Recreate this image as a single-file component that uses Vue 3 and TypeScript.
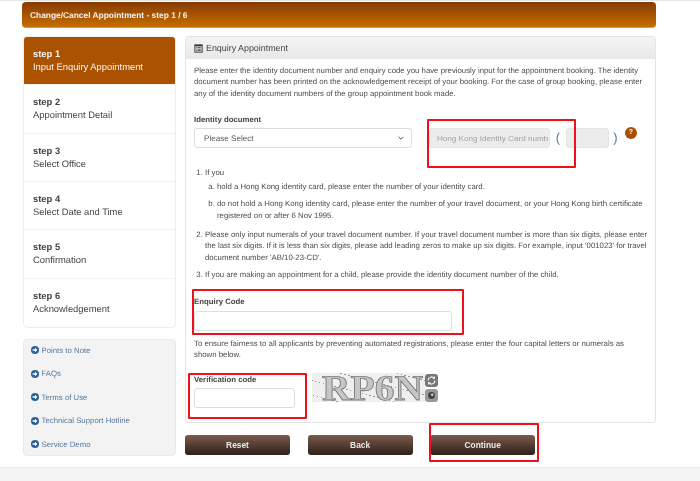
<script setup lang="ts">
const steps = [
  { n: 'step 1', label: 'Input Enquiry Appointment', active: true },
  { n: 'step 2', label: 'Appointment Detail', active: false },
  { n: 'step 3', label: 'Select Office', active: false },
  { n: 'step 4', label: 'Select Date and Time', active: false },
  { n: 'step 5', label: 'Confirmation', active: false },
  { n: 'step 6', label: 'Acknowledgement', active: false },
]
const links = ['Points to Note', 'FAQs', 'Terms of Use', 'Technical Support Hotline', 'Service Demo']
const noise: number[][] = []
for (let i = 0; i < 90; i++) {
  noise.push([(i * 37) % 113, (i * 53 + 7) % 29])
}
</script>

<template>
  <div class="page">
    <div class="wrap">
      <header class="title">Change/Cancel Appointment - step 1 / 6</header>
      <div class="columns">
        <aside class="side">
          <ul class="steps">
            <li v-for="s in steps" :key="s.n" class="step" :class="{ active: s.active }">
              <strong>{{ s.n }}</strong>
              <span>{{ s.label }}</span>
            </li>
          </ul>
          <ul class="links">
            <li v-for="l in links" :key="l">
              <svg class="arrow" viewBox="0 0 12 12" aria-hidden="true">
                <circle cx="6" cy="6" r="6" fill="#2a6099" />
                <path d="M2.5 4.8H6V2.8L9.6 6 6 9.2V7.2H2.5z" fill="#fff" />
              </svg>
              {{ l }}
            </li>
          </ul>
        </aside>
        <main class="content">
          <section class="panel">
            <h2 class="panel-head">
              <svg class="list-icon" viewBox="0 0 12 12" aria-hidden="true">
                <path d="M0.5 0.5h11v11H0.5z" fill="#333" />
                <path d="M1.7 3h8.6v7.3H1.7z" fill="#ddd" />
                <path d="M3 4.2h1.6v1.2H3zM5.4 4.2H9v1.2H5.4zM3 6.2h1.6v1.2H3zM5.4 6.2H9v1.2H5.4zM3 8.2h1.6v1.2H3zM5.4 8.2H9v1.2H5.4z" fill="#333" />
              </svg>
              Enquiry Appointment
            </h2>
            <div class="panel-body">
              <p class="intro">Please enter the identity document number and enquiry code you have previously input for the appointment booking. The identity document number has been printed on the acknowledgement receipt of your booking. For the case of group booking, please enter any of the identity document numbers of the group appointment book made.</p>
              <label class="label id-label">Identity document</label>
              <div class="id-row">
                <div class="select">
                  <span>Please Select</span>
                  <svg viewBox="0 0 10 6" aria-hidden="true"><path d="M1 1l4 4 4-4" fill="none" stroke="#444" stroke-width="1.5" /></svg>
                </div>
                <input class="input disabled id-number" disabled placeholder="Hong Kong Identity Card number" />
                <span class="paren">(</span>
                <input class="input disabled id-check" disabled />
                <span class="paren close">)</span>
                <span class="help">?</span>
              </div>
              <ol class="notes">
                <li>
                  If you
                  <ol class="sub" type="a">
                    <li>hold a Hong Kong identity card, please enter the number of your identity card.</li>
                    <li>do not hold a Hong Kong identity card, please enter the number of your travel document, or your Hong Kong birth certificate registered on or after 6 Nov 1995.</li>
                  </ol>
                </li>
                <li>Please only input numerals of your travel document number. If your travel document number is more than six digits, please enter the last six digits. If it is less than six digits, please add leading zeros to make up six digits. For example, input '001023' for travel document number 'AB/10-23-CD'.</li>
                <li>If you are making an appointment for a child, please provide the identity document number of the child.</li>
              </ol>
              <label class="label code-label">Enquiry Code</label>
              <input class="input code-input" />
              <p class="fair">To ensure fairness to all applicants by preventing automated registrations, please enter the four capital letters or numerals as shown below.</p>
              <div class="verify">
                <div class="verify-field">
                  <label class="label">Verification code</label>
                  <input class="input verify-input" />
                </div>
                <div class="captcha">
                  <svg class="captcha-img" viewBox="0 0 113 29" aria-label="Verification image">
                    <rect width="113" height="29" fill="#efefef" />
                    <rect v-for="(p, i) in noise" :key="i" :x="p[0]" :y="p[1]" width="1" height="1" fill="#999" />
                    <text x="10" y="27" textLength="101" lengthAdjust="spacingAndGlyphs" class="captcha-text">RP6N</text>
                  </svg>
                  <div class="captcha-tools">
                    <svg viewBox="0 0 13 13" aria-hidden="true">
                      <rect width="13" height="13" rx="3" fill="#777" />
                      <path d="M3 6.5a3.5 3.5 0 0 1 6.2-2.2M10 6.5a3.5 3.5 0 0 1-6.2 2.2" fill="none" stroke="#f2f2f2" stroke-width="1.2" />
                      <path d="M10 2v2.8H7.2zM3 11V8.2h2.8z" fill="#f2f2f2" />
                    </svg>
                    <svg viewBox="0 0 13 13" aria-hidden="true">
                      <rect width="13" height="13" rx="3" fill="#999" />
                      <circle cx="6.5" cy="6.5" r="3.4" fill="#444" />
                      <circle cx="7.2" cy="5.8" r="1.3" fill="#ccc" />
                    </svg>
                  </div>
                </div>
              </div>
            </div>
          </section>
          <div class="actions">
            <button class="btn" type="button">Reset</button>
            <button class="btn" type="button">Back</button>
            <button class="btn" type="button">Continue</button>
          </div>
        </main>
      </div>
    </div>
    <footer class="foot"></footer>
    <div class="mark m1"></div>
    <div class="mark m2"></div>
    <div class="mark m3"></div>
    <div class="mark m4"></div>
  </div>
</template>

<style scoped>
.page {
  position: relative;
  width: 700px;
  height: 481px;
  overflow: hidden;
  background: #fff;
  border-top: 1px solid #e6e6e6;
  box-sizing: border-box;
  font-family: "Liberation Sans", Arial, sans-serif;
  text-rendering: geometricPrecision;
  color: #4c4c4c;
  font-size: 7.8px;
  filter: blur(0.3px);
}
.wrap {
  width: 634px;
  margin-left: 22px;
  padding-top: 1px;
}
.title {
  height: 26px;
  box-sizing: border-box;
  padding: 0 8px;
  display: flex;
  align-items: center;
  border-radius: 4px;
  border-bottom: 1px solid #d99a3c;
  background: linear-gradient(#873a00, #c56e00);
  color: #f2f2f2;
  font-weight: 700;
  font-size: 8.4px;
}
.columns {
  display: grid;
  grid-template-columns: 153px 471px;
  gap: 9px;
  margin: 8px 0 0 1px;
}
ul {
  list-style: none;
  margin: 0;
  padding: 0;
}
.steps {
  border: 1px solid #eee;
  border-radius: 4px;
  overflow: hidden;
  background: #fff;
}
.step {
  height: 48.33px;
  box-sizing: border-box;
  padding: 10px 9px 0;
  display: flex;
  flex-direction: column;
  font-size: 9.4px;
  line-height: 13px;
  color: #444;
  border-bottom: 1px solid #f2f2f2;
}
.step:last-child {
  border-bottom: 0;
}
.step strong {
  font-weight: 700;
}
.step.active {
  background: #aa5200;
  color: #f5f5f5;
}
.links {
  margin-top: 11px;
  height: 117px;
  box-sizing: border-box;
  padding: 3px 7px;
  background: #f3f3f3;
  border: 1px solid #e9e9e9;
  border-radius: 4px;
  display: flex;
  flex-direction: column;
  justify-content: space-between;
  color: #55789f;
  font-size: 7.8px;
}
.links li {
  display: flex;
  align-items: center;
  gap: 2.5px;
  height: 15px;
}
.arrow {
  width: 8px;
  height: 8px;
}
.panel {
  height: 387px;
  box-sizing: border-box;
  border: 1px solid #e4e4e4;
  border-radius: 3px;
}
.panel-head {
  margin: 0;
  height: 22px;
  box-sizing: border-box;
  padding: 0 8px;
  display: flex;
  align-items: center;
  gap: 3px;
  font-weight: 400;
  font-size: 8.9px;
  color: #444;
  background: linear-gradient(#f4f4f4, #e8e8e8);
}
.list-icon {
  width: 9px;
  height: 9px;
}
.panel-body {
  padding: 6px 8px 0;
  line-height: 11.3px;
}
.intro {
  margin: 0;
}
.label {
  display: block;
  font-weight: 700;
  color: #444;
  font-size: 7.8px;
}
.id-label {
  margin-top: 15px;
}
.id-row {
  display: flex;
  align-items: flex-start;
  margin-top: 3px;
  height: 20px;
}
.select {
  width: 218px;
  height: 20px;
  box-sizing: border-box;
  padding: 0 7px 0 9px;
  border: 1px solid #ddd;
  border-radius: 3px;
  display: flex;
  align-items: center;
  justify-content: space-between;
  color: #555;
  font-size: 8.1px;
}
.select svg {
  width: 6px;
  height: 4px;
}
.input {
  box-sizing: border-box;
  height: 20px;
  border: 1px solid #ddd;
  border-radius: 3px;
  background: #fff;
  font: inherit;
  padding: 0 1px 0 7px;
  display: block;
  outline: 0;
}
.input.disabled {
  background: #ececec;
  border-color: #e4e4e4;
}
.input.disabled::placeholder {
  color: #a0a0a0;
  opacity: 1;
}
.id-number {
  width: 121px;
  margin-left: 17px;
  font-size: 8.1px;
}
.id-check {
  width: 43px;
}
.paren {
  width: 16px;
  text-align: center;
  line-height: 20px;
  font-size: 13px;
  color: #55789f;
}
.paren.close {
  width: 13px;
}
.help {
  width: 12px;
  height: 12px;
  margin: -1px 0 0 3px;
  border-radius: 50%;
  background: #a85000;
  color: #fff;
  font-size: 7px;
  font-weight: 700;
  line-height: 12px;
  text-align: center;
}
.notes {
  margin: 19px -5px 0 0;
  padding-left: 11px;
}
.notes > li {
  margin-bottom: 6px;
}
.notes > li:first-child {
  margin-bottom: 8px;
}
.sub {
  margin: 3px 0 0;
  padding-left: 12px;
}
.sub li {
  margin-bottom: 5.7px;
}
.sub li:last-child {
  margin-bottom: 0;
}
.code-label {
  margin-top: 16px;
}
.code-input {
  width: 258px;
  margin-top: 3px;
}
.fair {
  margin: 7px 0 0;
}
.verify {
  display: flex;
  align-items: flex-start;
  margin-top: 14px;
}
.verify-field {
  width: 118px;
}
.verify-input {
  width: 101px;
  margin-top: 3px;
}
.captcha {
  display: flex;
  align-items: flex-start;
  margin-top: -1px;
}
.captcha-img {
  width: 113px;
  height: 29px;
  display: block;
  overflow: visible;
}
.captcha-text {
  font-family: "Liberation Serif", serif;
  font-size: 36px;
  font-weight: 700;
  fill: #c6c6c6;
  stroke: #777;
  stroke-width: 0.8px;
}
.captcha-tools {
  display: flex;
  flex-direction: column;
  gap: 2px;
  margin-top: 1px;
}
.captcha-tools svg {
  width: 13px;
  height: 13px;
  display: block;
}
.actions {
  display: grid;
  grid-template-columns: repeat(3, 105px);
  column-gap: 17.6px;
  margin-top: 12px;
}
.btn {
  height: 20px;
  border: 0;
  border-radius: 3px;
  background: linear-gradient(#7a5c4d, #2e1f18);
  color: #e8e8e8;
  font: 700 8.4px "Liberation Sans", Arial, sans-serif;
  padding: 0;
}
.foot {
  position: absolute;
  left: 0;
  right: 0;
  bottom: 0;
  height: 13px;
  background: #f4f4f4;
  border-top: 1px solid #ebebeb;
}
.mark {
  position: absolute;
  box-sizing: border-box;
  border: 2px solid #f0101c;
  border-radius: 1px;
}
.m1 { left: 427px; top: 118px; width: 149px; height: 49px; }
.m2 { left: 192px; top: 288px; width: 272px; height: 46px; }
.m3 { left: 188px; top: 372px; width: 119px; height: 46px; }
.m4 { left: 429px; top: 422px; width: 110px; height: 39px; }
</style>

<style>
html, body { margin: 0; padding: 0; background: #fff; }
</style>
